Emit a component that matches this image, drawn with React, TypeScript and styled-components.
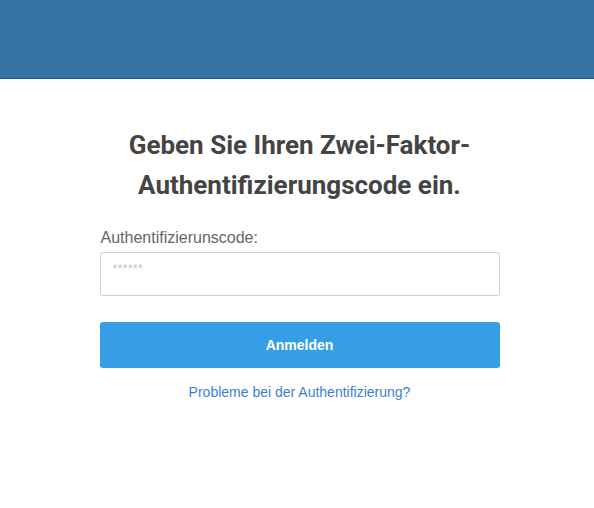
import React from "react";
import styled, { createGlobalStyle } from "styled-components";

const GlobalStyle = createGlobalStyle`
  html, body {
    margin: 0;
    padding: 0;
    background: #ffffff;
  }
  body {
    font-family: "Liberation Sans", Arial, sans-serif;
  }
`;

const Page = styled.div`
  display: flex;
  flex-direction: column;
  min-height: 508px;
`;

const TopBar = styled.header`
  height: 78px;
  background: #3475a6;
  border-bottom: 1px solid #1d5a80;
`;

const Main = styled.main`
  display: flex;
  flex-direction: column;
  align-items: center;
  padding: 46px 0 0 5px;
`;

const Title = styled.h1`
  margin: 0;
  width: 400px;
  font-family: Roboto, "Noto Sans", sans-serif;
  font-weight: 700;
  font-size: 26px;
  line-height: 40px;
  color: #444444;
  text-align: center;
`;

const Form = styled.form`
  width: 400px;
  margin-top: 23px;
  display: flex;
  flex-direction: column;
`;

const Label = styled.label`
  font-size: 16px;
  line-height: 20px;
  color: #666666;
  padding-left: 1px;
`;

const CodeInput = styled.input`
  box-sizing: border-box;
  margin-top: 4px;
  width: 100%;
  height: 44px;
  border: 1px solid #cfcfcf;
  border-radius: 3px;
  padding: 0 12px 12px;
  font-family: "Liberation Sans", Arial, sans-serif;
  font-size: 13px;
  color: #444;
  outline: none;
  &::placeholder {
    color: #c8c8c8;
  }
`;

const SubmitButton = styled.button`
  margin-top: 26px;
  height: 46px;
  width: 100%;
  border: none;
  border-radius: 3px;
  background: #369ee4;
  color: #ffffff;
  font-family: "Liberation Sans", Arial, sans-serif;
  font-weight: 700;
  font-size: 14px;
  cursor: pointer;
`;

const HelpLink = styled.a`
  margin-top: 16px;
  align-self: center;
  font-size: 14px;
  line-height: 16px;
  color: #3d7fd6;
  text-decoration: none;
`;

export default function App() {
  return (
    <Page>
      <GlobalStyle />
      <TopBar />
      <Main>
        <Title>Geben Sie Ihren Zwei-Faktor-Authentifizierungscode ein.</Title>
        <Form onSubmit={(e) => e.preventDefault()}>
          <Label htmlFor="code">Authentifizierunscode:</Label>
          <CodeInput id="code" type="text" placeholder="******" />
          <SubmitButton type="submit">Anmelden</SubmitButton>
          <HelpLink href="#">Probleme bei der Authentifizierung?</HelpLink>
        </Form>
      </Main>
    </Page>
  );
}
